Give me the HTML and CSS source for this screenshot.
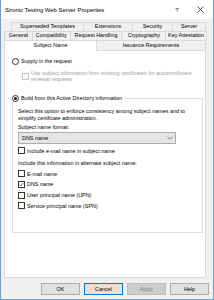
FILE: index.html
```html
<!DOCTYPE html>
<html lang="en">
<head>
    <meta charset="UTF-8">
    <meta name="viewport" content="width=device-width, initial-scale=1.0">
    <title>Sironic Testing Web Server Properties</title>
    <link rel="stylesheet" href="styles.css">
</head>
<body>
    <div class="window">
        <div class="titlebar">
            <span class="title">Sironic Testing Web Server Properties</span>
            <span class="btn-help">?</span>
            <span class="btn-close">
                <svg width="7" height="7" viewBox="0 0 7 7"><path d="M0.5 0.5 L6.5 6.5 M6.5 0.5 L0.5 6.5" stroke="#222" stroke-width="0.8" fill="none"/></svg>
            </span>
        </div>
        <div class="content">
            <div class="tabs">
                <div class="tab-row row1">
                    <div class="tab w-superseded">Superseded Templates</div>
                    <div class="tab w-extensions">Extensions</div>
                    <div class="tab w-security">Security</div>
                    <div class="tab w-server">Server</div>
                </div>
                <div class="tab-row row2">
                    <div class="tab w-general">General</div>
                    <div class="tab w-compat">Compatibility</div>
                    <div class="tab w-request">Request Handling</div>
                    <div class="tab w-crypto">Cryptography</div>
                    <div class="tab w-key">Key Attestation</div>
                </div>
                <div class="tab-row row3">
                    <div class="tab w-subject selected">Subject Name</div>
                    <div class="tab w-issuance">Issuance Requirements</div>
                </div>
            </div>
            <div class="panel">
                <div class="option">
                    <span class="radio"></span>
                    <span>Supply in the request</span>
                </div>
                <div class="option sub disabled">
                    <span class="check"></span>
                    <span class="lines">Use subject information from existing certificates for autoenrollment<br>renewal requests</span>
                </div>
                <div class="option group-caption">
                    <span class="radio on"></span>
                    <span>Build from this Active Directory information</span>
                </div>
                <div class="group">
                    <p class="lines">Select this option to enforce consistency among subject names and to<br>simplify certificate administration.</p>
                    <p class="label">Subject name format:</p>
                    <div class="select">
                        <span>DNS name</span>
                        <svg width="6" height="4" viewBox="0 0 6 4"><path d="M0.5 0.8 L3 3.2 L5.5 0.8" stroke="#606060" stroke-width="0.7" fill="none"/></svg>
                    </div>
                    <div class="option cb first">
                        <span class="check"></span>
                        <span>Include e-mail name in subject name</span>
                    </div>
                    <p class="label alt">Include this information in alternate subject name:</p>
                    <div class="option cb">
                        <span class="check"></span>
                        <span>E-mail name</span>
                    </div>
                    <div class="option cb">
                        <span class="check">
                            <svg width="5" height="5" viewBox="0 0 5 5"><path d="M0.6 2.6 L1.9 3.9 L4.4 0.9" stroke="#222" stroke-width="0.7" fill="none"/></svg>
                        </span>
                        <span>DNS name</span>
                    </div>
                    <div class="option cb">
                        <span class="check"></span>
                        <span>User principal name (UPN)</span>
                    </div>
                    <div class="option cb">
                        <span class="check"></span>
                        <span>Service principal name (SPN)</span>
                    </div>
                </div>
            </div>
            <div class="buttons">
                <button class="button">OK</button>
                <button class="button focus">Cancel</button>
                <button class="button off">Apply</button>
                <button class="button">Help</button>
            </div>
        </div>
    </div>
</body>
</html>
```

FILE: styles.css
```css
*{padding:0; margin:0; box-sizing:border-box;}

html, body{
    width:214px;
    height:300px;
    overflow:hidden;
}
body{
    font-family:"Liberation Sans", Arial, sans-serif;
    font-size:5.4px;
    color:#000;
}

.window{
    width:214px;
    height:300px;
    border:1px solid #6d9fd6;
    border-top:0;
    background:#f0f0f0;
    display:flex;
    flex-direction:column;
}

/* title bar */
.titlebar{
    height:19px;
    flex:none;
    background:#fff;
    display:flex;
    align-items:center;
    padding-left:4px;
    font-size:5.9px;
}
.titlebar .btn-help{
    margin-left:auto;
    width:22px;
    text-align:center;
    color:#222;
}
.titlebar .btn-close{
    width:25px;
    height:19px;
    display:flex;
    align-items:center;
    justify-content:center;
}

.content{
    flex:1;
    display:flex;
    flex-direction:column;
    padding:3px 7px 4px 3px;
}

/* tabs */
.tab-row{
    display:flex;
    height:9px;
}
.tab-row.row1{margin-left:7px;}
.tab-row.row3{height:10px;}
.tab{
    border:1px solid #d9d9d9;
    border-bottom:0;
    margin-right:-1px;
    display:flex;
    align-items:center;
    justify-content:center;
    white-space:nowrap;
    background:#f0f0f0;
    line-height:1;
}
.tab.selected{
    background:#fff;
    position:relative;
    z-index:1;
    height:11px;
}
.w-superseded{width:73px;}
.w-extensions{width:50px;}
.w-security{width:41px;}
.w-server{width:34px;}
.w-general{width:29px;}
.w-compat{width:39px;}
.w-request{width:53px;}
.w-crypto{width:45px;}
.w-key{width:42px;}
.w-subject{width:93px;}
.w-issuance{width:110px;}

/* tab page */
.panel{
    flex:1;
    width:202px;
    background:#fff;
    border:1px solid #d9d9d9;
    padding:6px 1px 0 7px;
}

.option{
    display:flex;
    align-items:center;
    height:8px;
    white-space:nowrap;
}
.radio{
    width:7px;
    height:7px;
    border:1px solid #333;
    border-radius:50%;
    margin-right:2px;
    flex:none;
    display:flex;
    align-items:center;
    justify-content:center;
}
.radio.on::after{
    content:"";
    width:3px;
    height:3px;
    border-radius:50%;
    background:#111;
}
.check{
    width:7px;
    height:7px;
    border:1px solid #333;
    background:#fff;
    margin-right:2px;
    flex:none;
    display:flex;
    align-items:center;
    justify-content:center;
}
.lines{line-height:6.5px;}

.option.sub{
    height:14px;
    margin-top:4px;
    padding-left:10px;
}
.option.disabled{color:#a0a0a0;}
.option.disabled .check{border-color:#c2c2c2;}

.option.group-caption{
    margin-top:11px;
    width:fit-content;
    padding-right:2px;
    background:#fff;
    position:relative;
    z-index:1;
}
.group{
    margin-top:-4px;
    border:1px solid #dcdcdc;
    width:191px;
    padding:9px 0 23px 5px;
}
.group .label{
    line-height:6.5px;
    margin-top:3px;
}
.group .label.alt{margin-top:6px;}

.select{
    width:158px;
    height:12px;
    margin-top:1px;
    background:#e5e5e5;
    border:1px solid #adadad;
    display:flex;
    align-items:center;
    justify-content:space-between;
    padding:0 2px 0 3px;
}
.option.cb{
    height:7px;
    margin-top:3.7px;
}
.option.cb.first{margin-top:3.5px;}

/* dialog buttons */
.buttons{
    flex:none;
    height:12px;
    margin-top:5px;
    display:flex;
    justify-content:flex-end;
    gap:4px;
    margin-right:-3px;
}
.button{
    width:39px;
    height:12px;
    font-family:inherit;
    font-size:5.4px;
    color:#000;
    background:#e1e1e1;
    border:1px solid #adadad;
}
.button.focus{border-color:#0078d7;}
.button.off{
    background:#cccccc;
    border-color:#bfbfbf;
    color:#838383;
}
```
